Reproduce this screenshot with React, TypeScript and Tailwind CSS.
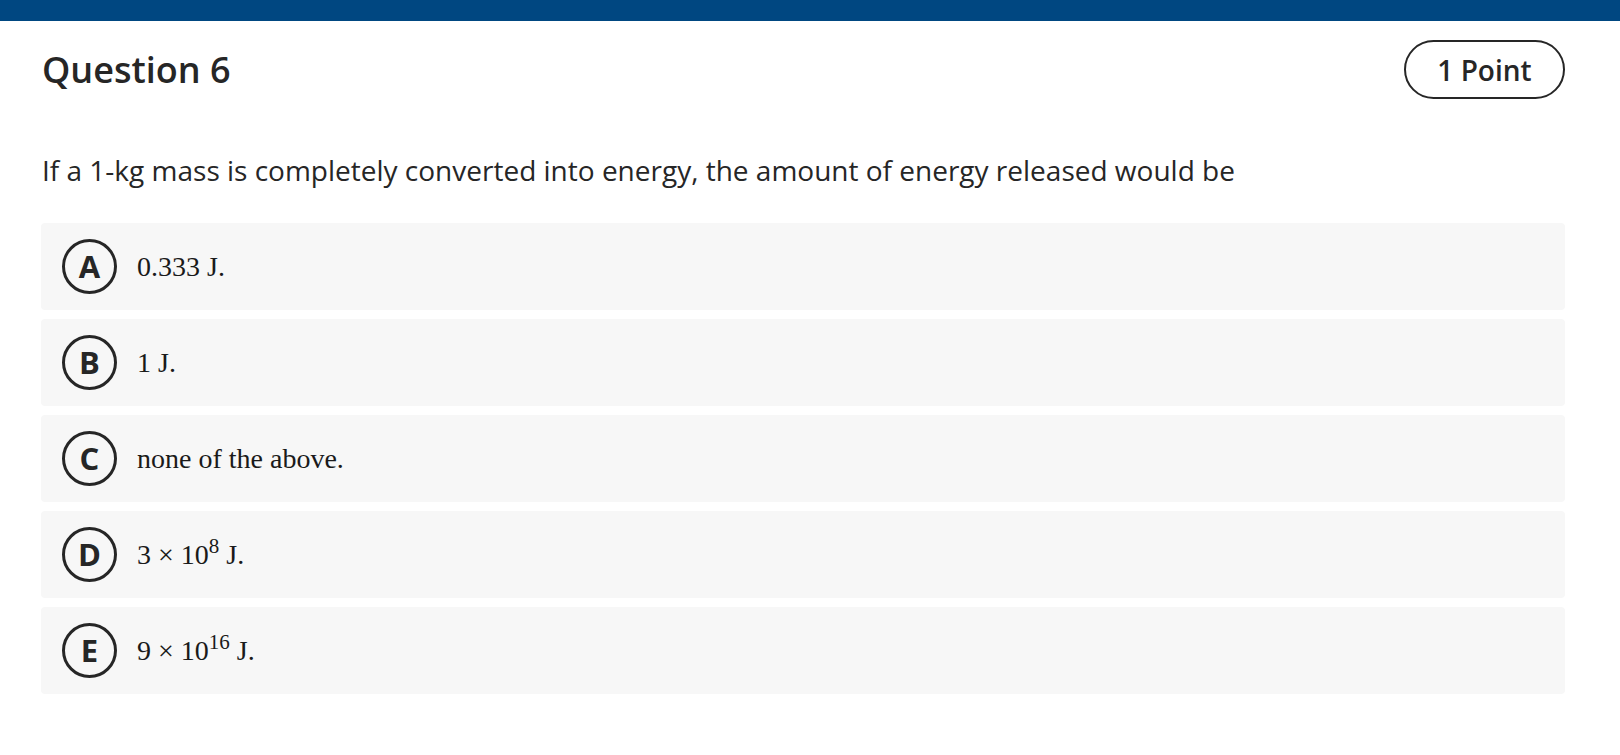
import React from "react";

const options: { letter: string; content: React.ReactNode }[] = [
  { letter: "A", content: "0.333 J." },
  { letter: "B", content: "1 J." },
  { letter: "C", content: "none of the above." },
  {
    letter: "D",
    content: (
      <>
        3 × 10<sup>8</sup> J.
      </>
    ),
  },
  {
    letter: "E",
    content: (
      <>
        9 × 10<sup>16</sup> J.
      </>
    ),
  },
];

function OptionRow({ letter, content }: { letter: string; content: React.ReactNode }) {
  return (
    <div className="flex h-[87px] items-center rounded-[4px] bg-[#f7f7f7] pl-[21px]">
      <div className="flex h-[55px] w-[55px] shrink-0 items-center justify-center rounded-full border-[3px] border-[#262626] font-['Open_Sans',sans-serif] text-[31px] font-bold leading-none text-[#262626]">
        {letter}
      </div>
      <div className="ml-[20px] font-['Liberation_Serif',serif] text-[28px] leading-none text-[#1a1a1a]">
        {content}
      </div>
    </div>
  );
}

export default function App() {
  return (
    <div className="min-h-screen bg-white text-[#262626]">
      <div className="h-[21px] bg-[#004781]" />
      <div className="pl-[41px] pr-[55px]">
        <div className="flex items-center justify-between pt-[19px]">
          <h1 className="pl-[1px] font-['Open_Sans',sans-serif] text-[36px] font-semibold leading-none">
            Question 6
          </h1>
          <div className="flex h-[59px] w-[161px] items-center justify-center rounded-full border-2 border-[#262626] font-['Open_Sans',sans-serif] text-[28px] font-semibold leading-none">
            1 Point
          </div>
        </div>
        <p className="mt-[50px] pl-[1px] font-['Open_Sans',sans-serif] text-[28px] leading-[42px]">
          If a 1-kg mass is completely converted into energy, the amount of energy released would be
        </p>
        <div className="mt-[32px] flex flex-col gap-[9px]">
          {options.map((o) => (
            <OptionRow key={o.letter} letter={o.letter} content={o.content} />
          ))}
        </div>
      </div>
    </div>
  );
}
